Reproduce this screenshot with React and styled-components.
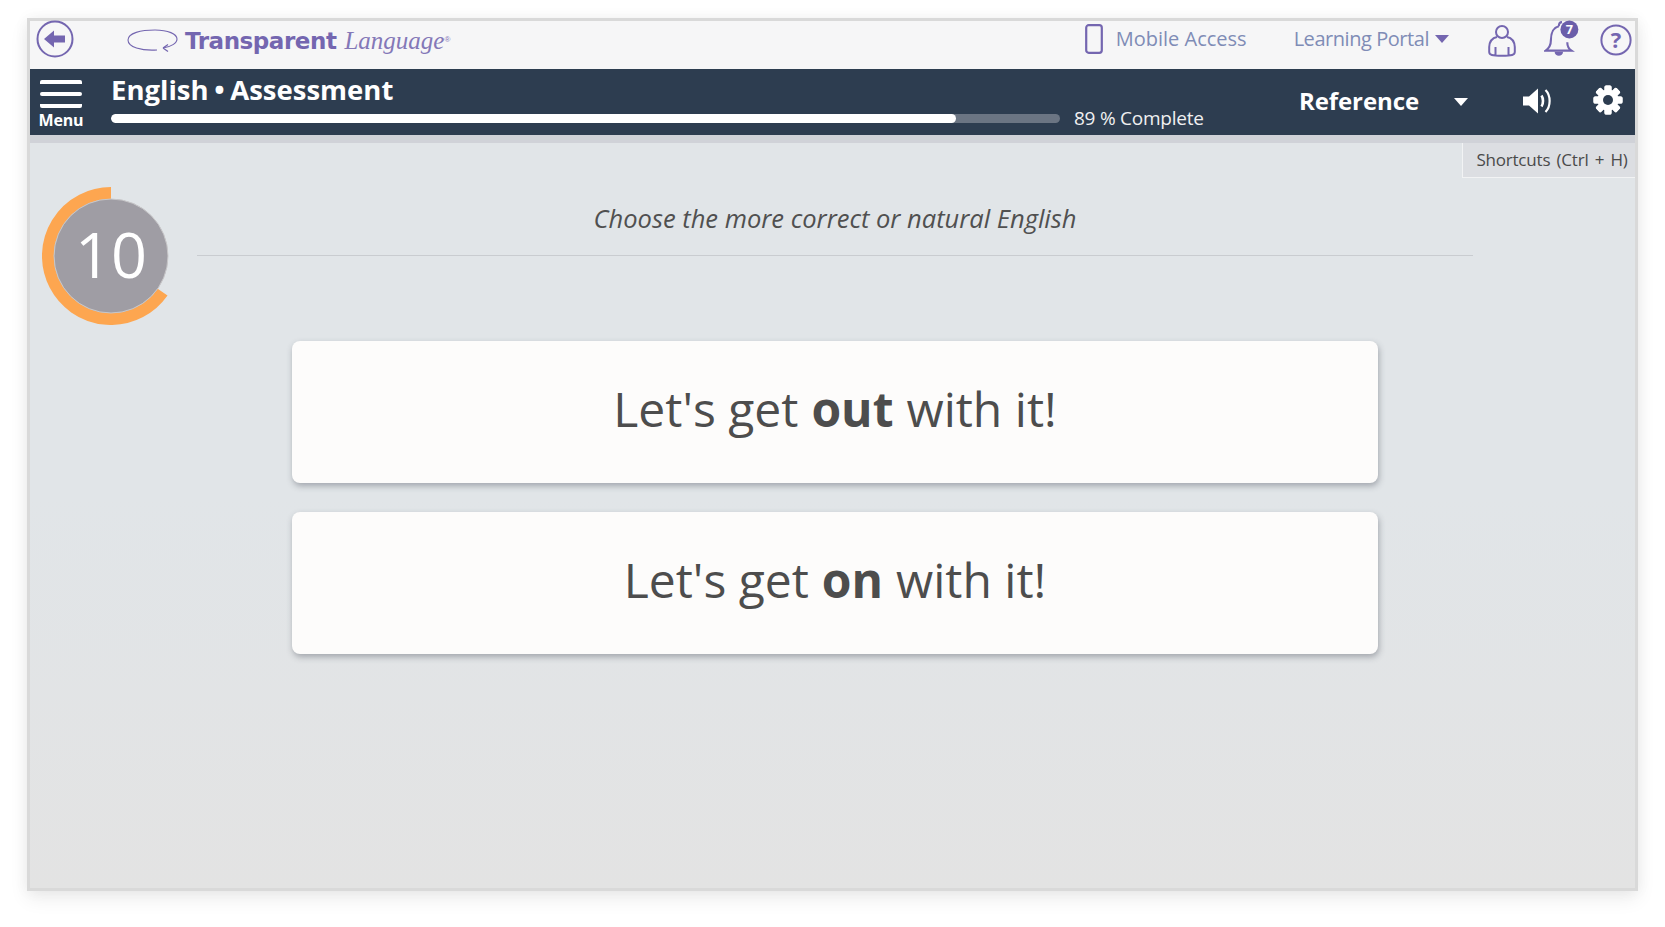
import React from "react";
import styled, { createGlobalStyle } from "styled-components";

const GlobalStyle = createGlobalStyle`
  html, body {
    margin: 0;
    padding: 0;
    background: #fff;
    font-family: "Open Sans", sans-serif;
  }
  * {
    box-sizing: border-box;
  }
`;

const Page = styled.div`
  width: 1665px;
  height: 927px;
  padding: 18px 27px 0 27px;
`;

const Frame = styled.div`
  position: relative;
  width: 1611px;
  height: 873px;
  border: 3px solid #d9d9d9;
  display: flex;
  flex-direction: column;
  background: linear-gradient(180deg, #e1e5e8 0%, #e1e5e8 55%, #e3e3e3 100%);
  box-shadow: 0 8px 18px rgba(0, 0, 0, 0.07), 0 0 14px rgba(0, 0, 0, 0.05);
`;

const TopBar = styled.div`
  height: 48px;
  flex: none;
  display: flex;
  align-items: center;
  background: #f6f6f7;
  color: #7466b0;
  padding: 0 0 8px 6px;
`;

const LogoGroup = styled.div`
  display: flex;
  align-items: center;
  margin-left: 53px;
  flex: 1;
`;

const LogoBold = styled.span`
  font-family: "DejaVu Sans", sans-serif;
  font-weight: 700;
  font-size: 23px;
  letter-spacing: -0.45px;
  margin-left: 6px;
`;

const LogoItalic = styled.span`
  font-family: "Liberation Serif", serif;
  font-style: italic;
  font-size: 25px;
  margin-left: 8px;
  color: #8478b8;
`;

const Reg = styled.sup`
  font-size: 8px;
  font-family: "Liberation Sans", sans-serif;
  position: relative;
  top: -2px;
  color: #8478b8;
`;

const NavLink = styled.span`
  font-size: 20px;
  color: #7f8cb6;
  display: flex;
  align-items: center;
  margin-top: -5px;
`;

const MobileLink = styled(NavLink)`
  gap: 13px;
  margin-right: 47px;
`;

const PortalLink = styled(NavLink)`
  gap: 6px;
  margin-right: 39px;
  letter-spacing: -0.45px;
`;

const IconSlot = styled.span`
  display: flex;
  margin-right: ${(p) => p.$gap || 0}px;
  margin-top: ${(p) => p.$top || 0}px;
`;

const DarkBar = styled.div`
  height: 66px;
  flex: none;
  display: flex;
  background: #2d3d50;
  color: #fff;
`;

const MenuBlock = styled.div`
  width: 81px;
  flex: none;
  display: flex;
  flex-direction: column;
  align-items: center;
  padding: 11px 20px 0 1px;
`;

const Burger = styled.span`
  width: 42px;
  height: 28px;
  flex: none;
  border-top: 4px solid #fff;
  border-bottom: 4px solid #fff;
  border-radius: 2px;
  position: relative;
  &::after {
    content: "";
    position: absolute;
    left: 0;
    right: 0;
    top: 8px;
    height: 4px;
    background: #fff;
    border-radius: 2px;
  }
`;

const MenuLabel = styled.span`
  font-size: 16px;
  font-weight: 700;
  line-height: 18px;
  margin-top: 3px;
  letter-spacing: -0.2px;
`;

const CourseBlock = styled.div`
  flex: none;
  width: 1143px;
`;

const CourseTitle = styled.div`
  font-size: 27.5px;
  font-weight: 700;
  line-height: 36px;
  margin-top: 3px;
  word-spacing: -1.5px;
`;

const ProgressRow = styled.div`
  display: flex;
  align-items: center;
  margin-top: 5px;
  height: 10px;
`;

const Track = styled.div`
  width: 949px;
  height: 9px;
  border-radius: 5px;
  background: #6b7583;
  overflow: hidden;
`;

const Fill = styled.div`
  height: 100%;
  background: #fff;
  border-radius: 5px;
`;

const ProgressLabel = styled.span`
  font-size: 19px;
  margin-left: 14px;
  color: #f0f0f0;
  letter-spacing: -0.25px;
  white-space: nowrap;
`;

const ToolBlock = styled.div`
  display: flex;
  align-items: center;
  margin-top: -4px;
`;

const ReferenceLabel = styled.span`
  font-size: 24px;
  font-weight: 700;
  letter-spacing: -0.1px;
  margin-left: 45px;
`;

const Caret = styled.span`
  width: 0;
  height: 0;
  border-left: ${(p) => p.$size}px solid transparent;
  border-right: ${(p) => p.$size}px solid transparent;
  border-top: ${(p) => p.$size + 1}px solid ${(p) => p.$color};
`;

const RefCaret = styled(Caret)`
  margin: 3px 54px 0 35px;
`;

const Strip = styled.div`
  height: 8px;
  flex: none;
  background: #d0d2d8;
`;

const Shortcuts = styled.div`
  position: absolute;
  right: 0;
  top: 122px;
  width: 173px;
  height: 35px;
  display: flex;
  align-items: center;
  justify-content: center;
  padding: 0 0 2px 6px;
  font-size: 17px;
  color: #4a4a4a;
  background: #dcdee2;
  border-left: 1px solid #f2f3f4;
  border-bottom: 1px solid #f2f3f4;
  letter-spacing: -0.2px;
  word-spacing: 2px;
`;

const Main = styled.div`
  flex: 1;
  padding: 44px 0 0 12px;
`;

const QuestionHead = styled.div`
  display: flex;
  align-items: flex-start;
`;

const TimerWrap = styled.div`
  position: relative;
  width: 138px;
  height: 138px;
  flex: none;
`;

const TimerValue = styled.div`
  position: absolute;
  inset: 0;
  display: flex;
  align-items: center;
  justify-content: center;
  padding-bottom: 6px;
  color: #fff;
  font-size: 63px;
  line-height: 1;
`;

const PromptBlock = styled.div`
  width: 1276px;
  margin: 2px 0 0 17px;
  border-bottom: 1px solid #c9ccd0;
  height: 67px;
  display: flex;
  justify-content: center;
`;

const Prompt = styled.div`
  font-size: 25.5px;
  font-style: italic;
  color: #505050;
  line-height: 34px;
  margin-top: 12px;
`;

const Choices = styled.div`
  display: flex;
  flex-direction: column;
  gap: 29px;
  width: 1086px;
  margin: 16px 0 0 250px;
`;

const Choice = styled.div`
  height: 142px;
  border-radius: 8px;
  background: #fdfcfb;
  box-shadow: 1px 3px 6px rgba(60, 65, 80, 0.38);
  display: flex;
  align-items: center;
  justify-content: center;
  font-size: 48px;
  color: #4d4d4d;
  padding-bottom: 7px;
  b {
    font-weight: 700;
    margin: 0 0.27em;
  }
`;

const BackIcon = () => (
  <svg width="38" height="38" viewBox="0 0 38 38">
    <circle cx="19" cy="19" r="17.5" fill="none" stroke="#7466b0" strokeWidth="2" />
    <path d="M8 19 L18 10.5 V15.5 H29 V22.5 H18 V27.5 Z" fill="#7466b0" />
  </svg>
);

const Swoosh = () => (
  <svg width="52" height="24" viewBox="0 0 52 24">
    <path
      d="M30 21 C14 22 1 18 1 11 C1 4 14 1 28 1 C41 1 50 5 50 10 C50 14 44 18 36 19"
      fill="none"
      stroke="#7466b0"
      strokeWidth="1.1"
    />
    <path d="M36 19 L41 15.5 M36 19 L41 22.5" fill="none" stroke="#7466b0" strokeWidth="1.3" />
  </svg>
);

const PhoneIcon = () => (
  <svg width="18" height="30" viewBox="0 0 18 30">
    <rect x="1.2" y="1.2" width="15.6" height="27.6" rx="2.5" fill="none" stroke="#7466b0" strokeWidth="2.2" />
  </svg>
);

const PersonIcon = () => (
  <svg width="28" height="33" viewBox="0 0 28 33">
    <circle cx="14" cy="8" r="6" fill="none" stroke="#7466b0" strokeWidth="2" />
    <path
      d="M9 13 C4 14 1.5 17 1.2 23 V28 C1.2 31 4 31.8 14 31.8 C24 31.8 26.8 31 26.8 28 V23 C26.5 17 24 14 19 13 M7.5 31 V23 M20.5 31 V23"
      fill="none"
      stroke="#7466b0"
      strokeWidth="2"
    />
  </svg>
);

const BellIcon = () => (
  <svg width="36" height="38" viewBox="0 0 34 36">
    <path
      d="M14 6 C7 8 6.5 14 6.5 19 C6.5 24 4.5 27 1.5 29 H26 C23 27 22 24 22 21 M14 6 C14 3.5 15 2 17 2"
      fill="none"
      stroke="#7466b0"
      strokeWidth="2"
    />
    <path d="M10 30 C10 35 18 35 18 30 Z" fill="#7466b0" />
    <circle cx="24" cy="9" r="8.5" fill="#6b5eaa" />
    <text x="24" y="13.5" fontSize="12" fontWeight="700" fill="#fff" textAnchor="middle" fontFamily="Open Sans, sans-serif">
      7
    </text>
  </svg>
);

const HelpIcon = () => (
  <svg width="32" height="32" viewBox="0 0 32 32">
    <circle cx="16" cy="16" r="14.6" fill="none" stroke="#7466b0" strokeWidth="2" />
    <text x="16" y="23.5" fontSize="22" fontWeight="700" fill="#7466b0" textAnchor="middle" fontFamily="Open Sans, sans-serif">
      ?
    </text>
  </svg>
);

const SpeakerIcon = () => (
  <svg width="31" height="28" viewBox="0 0 31 28">
    <path d="M1 9.5 H7 L16 1.5 V26.5 L7 18.5 H1 Z" fill="#fff" />
    <path d="M19.5 8.5 C21.5 11.5 21.5 16.5 19.5 19.5" fill="none" stroke="#fff" strokeWidth="2.6" />
    <path d="M23.5 3 C29 8.5 29 19.5 23.5 25" fill="none" stroke="#fff" strokeWidth="2.2" />
  </svg>
);

const GearIcon = () => {
  const teeth = [0, 45, 90, 135, 180, 225, 270, 315];
  return (
    <svg width="30" height="30" viewBox="0 0 30 30">
      {teeth.map((a) => (
        <rect key={a} x="11.5" y="0.5" width="7" height="29" rx="1.5" fill="#fff" transform={`rotate(${a} 15 15)`} />
      ))}
      <circle cx="15" cy="15" r="10.5" fill="#fff" />
      <circle cx="15" cy="15" r="5" fill="#2d3d50" />
    </svg>
  );
};

const TimerRing = () => (
  <svg width="138" height="138" viewBox="0 0 138 138">
    <path d="M69 6 A63 63 0 1 0 120.6 105.1" fill="none" stroke="#fda650" strokeWidth="12" />
    <circle cx="69" cy="69" r="57" fill="#9f9da4" stroke="#c8c7c9" strokeWidth="1" />
  </svg>
);

const App = () => (
  <Page>
    <GlobalStyle />
    <Frame>
      <TopBar>
        <IconSlot $top={-4}>
          <BackIcon />
        </IconSlot>
        <LogoGroup>
          <Swoosh />
          <LogoBold>Transparent</LogoBold>
          <LogoItalic>Language</LogoItalic>
          <Reg>®</Reg>
        </LogoGroup>
        <MobileLink>
          <PhoneIcon />
          Mobile Access
        </MobileLink>
        <PortalLink>
          Learning Portal
          <Caret $size={7} $color="#7466b0" />
        </PortalLink>
        <IconSlot $gap={28} $top={-2}>
          <PersonIcon />
        </IconSlot>
        <IconSlot $gap={20} $top={-5}>
          <BellIcon />
        </IconSlot>
        <IconSlot $gap={3} $top={-2}>
          <HelpIcon />
        </IconSlot>
      </TopBar>
      <DarkBar>
        <MenuBlock>
          <Burger />
          <MenuLabel>Menu</MenuLabel>
        </MenuBlock>
        <CourseBlock>
          <CourseTitle>English • Assessment</CourseTitle>
          <ProgressRow>
            <Track>
              <Fill style={{ width: "89%" }} />
            </Track>
            <ProgressLabel>89 % Complete</ProgressLabel>
          </ProgressRow>
        </CourseBlock>
        <ToolBlock>
          <ReferenceLabel>Reference</ReferenceLabel>
          <RefCaret $size={7} $color="#fff" />
          <IconSlot $gap={40} $top={2}>
            <SpeakerIcon />
          </IconSlot>
          <GearIcon />
        </ToolBlock>
      </DarkBar>
      <Strip />
      <Shortcuts>Shortcuts (Ctrl + H)</Shortcuts>
      <Main>
        <QuestionHead>
          <TimerWrap>
            <TimerRing />
            <TimerValue>10</TimerValue>
          </TimerWrap>
          <PromptBlock>
            <Prompt>Choose the more correct or natural English</Prompt>
          </PromptBlock>
        </QuestionHead>
        <Choices>
          <Choice>
            Let's get<b>out</b>with it!
          </Choice>
          <Choice>
            Let's get<b>on</b>with it!
          </Choice>
        </Choices>
      </Main>
    </Frame>
  </Page>
);

export default App;
